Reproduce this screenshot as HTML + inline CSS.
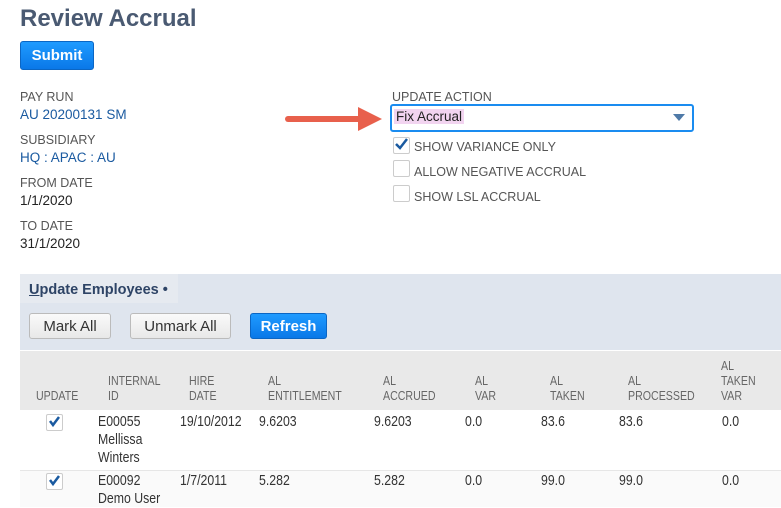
<html><head><style>
body{margin:0;width:781px;height:506px;overflow:hidden;background:#fff;font-family:"Liberation Sans",sans-serif;position:relative}
.a{position:absolute;white-space:nowrap}
.lbl{font-size:12.5px;color:#555}
.val{font-size:13.5px;color:#222}
.lnk{font-size:13.5px;color:#1a5aa0}
.th{font-size:12.5px;color:#666;line-height:15px;transform:scaleX(.85);transform-origin:left}
.td{font-size:15px;color:#333;line-height:18px;transform:scaleX(.82);transform-origin:left}
.cb{position:absolute;width:15px;height:15px;border:1px solid #ccc;background:#fff;border-radius:2px}
.btn{position:absolute;height:26px;border:1px solid #bbb;border-radius:3px;background:linear-gradient(#fafafa,#e8e8e8);font-size:15px;color:#333;text-align:center;line-height:26px;box-sizing:border-box}
</style></head><body>
<div class="a" style="left:20px;top:5px;font-size:24px;font-weight:bold;color:#4a5a72">Review Accrual</div>
<div class="btn" style="left:20px;top:41px;width:74px;height:29px;line-height:27px;background:linear-gradient(#1f9bff,#0a78e8);border-color:#0b66c4;color:#fff;font-size:15px;font-weight:bold">Submit</div>
<div class="a lbl" style="left:20px;top:90px">PAY RUN</div>
<div class="a lnk" style="left:20px;top:107px">AU 20200131 SM</div>
<div class="a lbl" style="left:20px;top:133px">SUBSIDIARY</div>
<div class="a lnk" style="left:20px;top:150px">HQ : APAC : AU</div>
<div class="a lbl" style="left:20px;top:176px">FROM DATE</div>
<div class="a val" style="left:20px;top:193px">1/1/2020</div>
<div class="a lbl" style="left:20px;top:219px">TO DATE</div>
<div class="a val" style="left:20px;top:236px">31/1/2020</div>
<svg class="a" style="left:282px;top:104px" width="110" height="30"><path d="M6 15 H80" stroke="#e8604c" stroke-width="6" stroke-linecap="round"/><path d="M76 3 L100 15 L76 27 Z" fill="#e8604c"/></svg>
<div class="a lbl" style="left:392px;top:90px">UPDATE ACTION</div>
<div class="a" style="left:390px;top:104px;width:304px;height:28px;border:2px solid #1a8cf0;border-radius:3px;box-sizing:border-box;background:#fff"></div>
<div class="a val" style="left:394px;top:109px;background:#f2d4f0;padding:0 2px">Fix Accrual</div>
<svg class="a" style="left:673px;top:114px" width="12" height="8"><path d="M0 0H12L6 7Z" fill="#4f7aa8"/></svg>
<div class="cb" style="left:393px;top:137px"></div>
<svg class="a" style="left:394px;top:137px" width="16" height="14"><path d="M2 7 L6 11 L13 2" stroke="#1a5aa0" stroke-width="2.5" fill="none"/></svg>
<div class="a lbl" style="left:414px;top:140px">SHOW VARIANCE ONLY</div>
<div class="cb" style="left:393px;top:160px"></div>
<div class="a lbl" style="left:414px;top:165px">ALLOW NEGATIVE ACCRUAL</div>
<div class="cb" style="left:393px;top:185px"></div>
<div class="a lbl" style="left:414px;top:190px">SHOW LSL ACCRUAL</div>
<div class="a" style="left:20px;top:274px;width:761px;height:76px;background:#dfe5ee"></div>
<div class="a" style="left:20px;top:274px;width:158px;height:29px;background:#e6eaf0"></div>
<div class="a" style="left:29px;top:282px;font-size:14.5px;font-weight:bold;color:#2e4466"><u>U</u>pdate Employees •</div>
<div class="btn" style="left:29px;top:313px;width:82px">Mark All</div>
<div class="btn" style="left:130px;top:313px;width:101px">Unmark All</div>
<div class="btn" style="left:250px;top:313px;width:77px;background:linear-gradient(#1f9bff,#0a78e8);border-color:#0b66c4;color:#fff;font-weight:bold">Refresh</div>
<div class="a" style="left:20px;top:351px;width:761px;height:59px;background:#e9e9e9"></div>
<div class="a" style="left:20px;top:470px;width:761px;height:36px;background:#fafafa;border-top:1px solid #e6e6e6"></div>
<div class="a th" style="left:36px;top:389px">UPDATE</div>
<div class="a th" style="left:108px;top:374px">INTERNAL<br>ID</div>
<div class="a th" style="left:189px;top:374px">HIRE<br>DATE</div>
<div class="a th" style="left:268px;top:374px">AL<br>ENTITLEMENT</div>
<div class="a th" style="left:383px;top:374px">AL<br>ACCRUED</div>
<div class="a th" style="left:475px;top:374px">AL<br>VAR</div>
<div class="a th" style="left:550px;top:374px">AL<br>TAKEN</div>
<div class="a th" style="left:628px;top:374px">AL<br>PROCESSED</div>
<div class="a th" style="left:721px;top:359px">AL<br>TAKEN<br>VAR</div>
<div class="cb" style="left:46px;top:414px"></div>
<svg class="a" style="left:47px;top:414px" width="16" height="14"><path d="M3 7 L6 11 L12 3" stroke="#1a5aa0" stroke-width="2.5" fill="none"/></svg>
<div class="a td" style="left:98px;top:413px">E00055<br>Mellissa<br>Winters</div>
<div class="a td" style="left:180px;top:413px">19/10/2012</div>
<div class="a td" style="left:259px;top:413px">9.6203</div>
<div class="a td" style="left:374px;top:413px">9.6203</div>
<div class="a td" style="left:465px;top:413px">0.0</div>
<div class="a td" style="left:541px;top:413px">83.6</div>
<div class="a td" style="left:619px;top:413px">83.6</div>
<div class="a td" style="left:722px;top:413px">0.0</div>
<div class="cb" style="left:46px;top:473px"></div>
<svg class="a" style="left:47px;top:473px" width="16" height="14"><path d="M3 7 L6 11 L12 3" stroke="#1a5aa0" stroke-width="2.5" fill="none"/></svg>
<div class="a td" style="left:98px;top:472px">E00092<br>Demo User</div>
<div class="a td" style="left:180px;top:472px">1/7/2011</div>
<div class="a td" style="left:259px;top:472px">5.282</div>
<div class="a td" style="left:374px;top:472px">5.282</div>
<div class="a td" style="left:465px;top:472px">0.0</div>
<div class="a td" style="left:541px;top:472px">99.0</div>
<div class="a td" style="left:619px;top:472px">99.0</div>
<div class="a td" style="left:722px;top:472px">0.0</div>
</body></html>
